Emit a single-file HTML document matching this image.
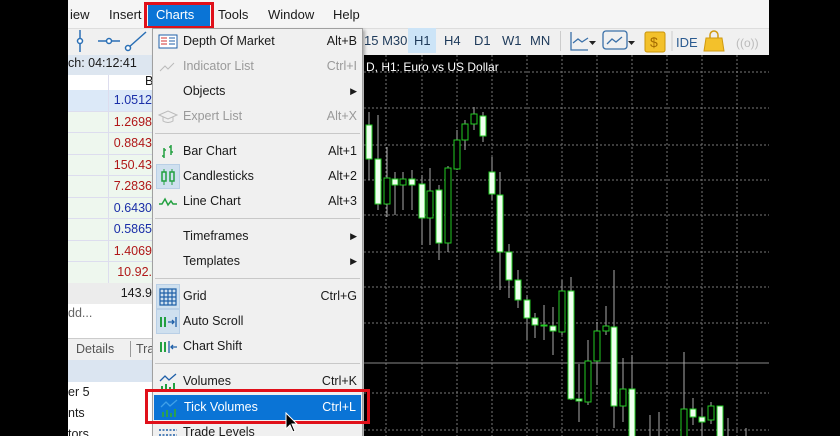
<!DOCTYPE html>
<html><head><meta charset="utf-8">
<style>
*{margin:0;padding:0;box-sizing:border-box}
body{width:840px;height:436px;background:#000;position:relative;overflow:hidden;font-family:"Liberation Sans",sans-serif;font-size:12.5px;color:#1a1a1a}
.abs{position:absolute}
#app{position:absolute;left:68px;top:0;width:701px;height:436px;background:#f0f0f0;overflow:hidden}
.mi{position:absolute;top:7px;font-size:13px}
.tf{position:absolute;top:33px;font-size:13px;color:#1e3a5a}
.row{position:absolute;left:0;width:84px;height:21.5px;border-bottom:1px solid #dde;background:#eef7ee}
.row span{position:absolute;right:0;top:3px;font-size:12.5px}
.menu{position:absolute;left:84px;top:28px;width:211px;height:420px;background:#f0f0f0;border:1px solid #a0a0a0;box-shadow:2px 2px 3px rgba(0,0,0,.3)}
.it{position:absolute;left:0;width:209px;height:25px;font-size:12.5px}
.it .t{position:absolute;left:30px;top:5px}
.it .k{position:absolute;right:5px;top:5px}
.dis{color:#9a9a9a}
.sep{position:absolute;left:2px;width:205px;height:1px;background:#c8c8c8}
.ic{position:absolute;left:4px;top:2px;width:22px;height:21px}
</style></head><body>
<div id="app">
 <div class="abs" style="left:0;top:0;width:701px;height:28px;background:#f5f5f5"></div>
 <div class="mi" style="left:2px">iew</div>
 <div class="mi" style="left:41px">Insert</div>
 <div class="abs" style="left:80px;top:5px;width:62px;height:21px;background:#0a74d6"></div>
 <div class="mi" style="left:88px;color:#fff">Charts</div>
 <div class="abs" style="left:76px;top:2px;width:70px;height:27px;border:3px solid #e0101a"></div>
 <div class="mi" style="left:150px">Tools</div>
 <div class="mi" style="left:200px">Window</div>
 <div class="mi" style="left:265px">Help</div>
 <div class="abs" style="left:0;top:28px;width:701px;height:26px;background:#f0f0f0;border-top:1px solid #ddd"></div>
 <svg class="abs" style="left:0;top:28px" width="90" height="26"><g stroke="#2a6fb5" stroke-width="1.5" fill="none"><line x1="12" y1="2" x2="12" y2="24"/><circle cx="12" cy="13" r="2.5" fill="#fff"/><line x1="30" y1="13" x2="52" y2="13"/><circle cx="41" cy="13" r="2.5" fill="#fff"/><line x1="60" y1="20" x2="78" y2="4"/><circle cx="60" cy="20" r="2.5" fill="#fff"/></g></svg>
 <div class="abs" style="left:340px;top:28px;width:28px;height:25px;background:#cce4f7"></div>
 <div class="tf" style="left:296px">15 M30</div>
 <div class="tf" style="left:346px">H1</div>
 <div class="tf" style="left:376px">H4</div>
 <div class="tf" style="left:406px">D1</div>
 <div class="tf" style="left:434px">W1</div>
 <div class="tf" style="left:462px">MN</div>
 <div class="abs" style="left:492px;top:31px;width:1px;height:20px;background:#ccc"></div>
 <svg class="abs" style="left:500px;top:28px" width="200" height="26"><g fill="none" stroke="#3a70a8" stroke-width="1.3"><path d="M3 4V22H20"/><path d="M5 15l5-4 4 3 6-4"/><path d="M21 13h7l-3.5 4z" fill="#222" stroke="none"/><rect x="35" y="3" width="24" height="18" rx="3"/><path d="M39 16l5-5 4 3 6-5"/><path d="M60 13h7l-3.5 4z" fill="#222" stroke="none"/></g>
 <rect x="77" y="4" width="20" height="20" rx="2" fill="#f3c12b" stroke="#c9950a"/><text x="82" y="19" font-size="14" fill="#a36a00" font-family="Liberation Sans">$</text>
 <line x1="104" y1="3" x2="104" y2="23" stroke="#ccc"/>
 <text x="108" y="19" font-size="13" fill="#2a5a90" font-family="Liberation Sans">IDE</text>
 <path d="M138 10h16l2 13h-20z" fill="#f3c12b" stroke="#d09a10"/><path d="M142 10v-3a4 4 0 0 1 8 0v3" fill="none" stroke="#d09a10" stroke-width="1.5"/>
 <text x="168" y="19" font-size="12" fill="#bbb" font-family="Liberation Sans">((o))</text></svg>
 <div class="abs" style="left:0;top:55px;width:84px;height:20px;background:#dde6f0"></div>
 <div class="abs" style="left:0;top:56px;font-size:12.5px">ch: 04:12:41</div>
 <div class="abs" style="left:0;top:75px;width:84px;height:15px;background:#fff"></div>
 <div class="abs" style="left:77px;top:74px">B</div>
 <div class="row" style="top:90px;background:#dce9f8"><span style="color:#1a2fa8">1.0512</span></div>
 <div class="row" style="top:111.5px"><span style="color:#b01818">1.2698</span></div>
 <div class="row" style="top:133px"><span style="color:#b01818">0.8843</span></div>
 <div class="row" style="top:154.5px"><span style="color:#b01818">150.43</span></div>
 <div class="row" style="top:176px"><span style="color:#b01818">7.2836</span></div>
 <div class="row" style="top:197.5px"><span style="color:#1a2fa8">0.6430</span></div>
 <div class="row" style="top:219px"><span style="color:#1a2fa8">0.5865</span></div>
 <div class="row" style="top:240.5px"><span style="color:#b01818">1.4069</span></div>
 <div class="row" style="top:262px"><span style="color:#b01818">10.92.</span></div>
 <div class="abs" style="left:40px;top:75px;width:1px;height:229px;background:#dde"></div>
 <div class="abs" style="left:0;top:283px;width:84px;height:21px;background:#ececec"></div>
 <div class="abs" style="right:617px;top:286px">143.9</div>
 <div class="abs" style="left:0;top:304px;width:84px;height:34px;background:#fff"></div>
 <div class="abs" style="left:0;top:306px;color:#666">dd...</div>
 <div class="abs" style="left:0;top:338px;width:84px;height:22px;background:#f0f0f0;border-top:1px solid #ccc"></div>
 <div class="abs" style="left:8px;top:342px;color:#555">Details</div>
 <div class="abs" style="left:62px;top:341px;width:1px;height:16px;background:#999"></div>
 <div class="abs" style="left:68px;top:342px;color:#555">Tra</div>
 <div class="abs" style="left:0;top:360px;width:84px;height:22px;background:#dbe5f1"></div>
 <div class="abs" style="left:0;top:382px;width:84px;height:54px;background:#fff"></div>
 <div class="abs" style="left:0;top:385px">er 5</div>
 <div class="abs" style="left:0;top:406px">nts</div>
 <div class="abs" style="left:0;top:427px">tors</div>
 <svg class="abs" style="left:296px;top:55px" width="405" height="381">
  <rect width="405" height="381" fill="#000"/>
  <g stroke="#777" stroke-width="1" stroke-dasharray="2,2">
   <line x1="22" y1="0" x2="22" y2="381"/><line x1="58" y1="0" x2="58" y2="381"/><line x1="93" y1="0" x2="93" y2="381"/><line x1="128" y1="0" x2="128" y2="381"/><line x1="163" y1="0" x2="163" y2="381"/><line x1="198" y1="0" x2="198" y2="381"/><line x1="233" y1="0" x2="233" y2="381"/><line x1="268" y1="0" x2="268" y2="381"/><line x1="303" y1="0" x2="303" y2="381"/><line x1="338" y1="0" x2="338" y2="381"/><line x1="373" y1="0" x2="373" y2="381"/>
   <line x1="0" y1="17" x2="405" y2="17"/><line x1="0" y1="53" x2="405" y2="53"/><line x1="0" y1="90" x2="405" y2="90"/><line x1="0" y1="125" x2="405" y2="125"/><line x1="0" y1="160" x2="405" y2="160"/><line x1="0" y1="197" x2="405" y2="197"/><line x1="0" y1="232" x2="405" y2="232"/><line x1="0" y1="268" x2="405" y2="268"/><line x1="0" y1="338" x2="405" y2="338"/><line x1="0" y1="375" x2="405" y2="375"/>
  </g>
  <line x1="0" y1="308" x2="405" y2="308" stroke="#888"/>
  <text x="2" y="16" fill="#fff" font-size="12" font-family="Liberation Sans">D, H1:  Euro vs US Dollar</text>
  <g transform="translate(-364,-55)" stroke="#aaa" stroke-width="1">
   <line x1="369" y1="112" x2="369" y2="180"/><line x1="378" y1="115" x2="378" y2="210"/><line x1="387" y1="147" x2="387" y2="217"/><line x1="395" y1="172" x2="395" y2="215"/><line x1="403" y1="172" x2="403" y2="210"/><line x1="412" y1="170" x2="412" y2="210"/><line x1="422" y1="175" x2="422" y2="245"/><line x1="430" y1="168" x2="430" y2="245"/><line x1="439" y1="185" x2="439" y2="260"/><line x1="448" y1="166" x2="448" y2="252"/><line x1="457" y1="130" x2="457" y2="170"/><line x1="465" y1="120" x2="465" y2="150"/><line x1="474" y1="107" x2="474" y2="130"/><line x1="483" y1="112" x2="483" y2="142"/><line x1="492" y1="157" x2="492" y2="200"/><line x1="500" y1="172" x2="500" y2="290"/><line x1="509" y1="244" x2="509" y2="298"/><line x1="518" y1="270" x2="518" y2="308"/><line x1="527" y1="295" x2="527" y2="340"/><line x1="535" y1="313" x2="535" y2="338"/><line x1="544" y1="305" x2="544" y2="340"/><line x1="553" y1="307" x2="553" y2="355"/><line x1="562" y1="280" x2="562" y2="335"/><line x1="571" y1="277" x2="571" y2="400"/><line x1="579" y1="364" x2="579" y2="422"/><line x1="588" y1="340" x2="588" y2="405"/><line x1="597" y1="322" x2="597" y2="385"/><line x1="606" y1="306" x2="606" y2="335"/><line x1="614" y1="270" x2="614" y2="428"/><line x1="623" y1="358" x2="623" y2="422"/><line x1="632" y1="355" x2="632" y2="436"/><line x1="650" y1="415" x2="650" y2="436"/><line x1="659" y1="412" x2="659" y2="436"/><line x1="684" y1="352" x2="684" y2="436"/><line x1="693" y1="398" x2="693" y2="425"/><line x1="702" y1="408" x2="702" y2="436"/><line x1="711" y1="402" x2="711" y2="424"/><line x1="728" y1="418" x2="728" y2="436"/><line x1="746" y1="428" x2="746" y2="436"/>
  </g>
  <g transform="translate(-364,-55)" stroke="#22cc22" stroke-width="1">
   <rect x="366" y="125" width="6" height="34" fill="#efffef"/><rect x="375" y="159" width="6" height="45" fill="#efffef"/><rect x="384" y="178" width="6" height="26" fill="#000"/><rect x="392" y="179" width="6" height="6" fill="#efffef"/><rect x="400" y="179" width="6" height="6" fill="#000"/><rect x="409" y="179" width="6" height="6" fill="#efffef"/><rect x="419" y="184" width="6" height="34" fill="#efffef"/><rect x="427" y="191" width="6" height="27" fill="#000"/><rect x="436" y="190" width="6" height="53" fill="#efffef"/><rect x="445" y="168" width="6" height="75" fill="#000"/><rect x="454" y="140" width="6" height="29" fill="#000"/><rect x="462" y="124" width="6" height="16" fill="#000"/><rect x="471" y="114" width="6" height="10" fill="#000"/><rect x="480" y="116" width="6" height="20" fill="#efffef"/><rect x="489" y="172" width="6" height="22" fill="#efffef"/><rect x="497" y="195" width="6" height="57" fill="#efffef"/><rect x="506" y="252" width="6" height="28" fill="#efffef"/><rect x="515" y="280" width="6" height="20" fill="#efffef"/><rect x="524" y="300" width="6" height="18" fill="#efffef"/><rect x="532" y="318" width="6" height="7" fill="#efffef"/><rect x="541" y="325" width="6" height="1" fill="#efffef"/><rect x="550" y="326" width="6" height="5" fill="#efffef"/><rect x="559" y="291" width="6" height="41" fill="#000"/><rect x="568" y="291" width="6" height="108" fill="#efffef"/><rect x="576" y="399" width="6" height="2" fill="#efffef"/><rect x="585" y="361" width="6" height="41" fill="#000"/><rect x="594" y="331" width="6" height="30" fill="#000"/><rect x="603" y="326" width="6" height="5" fill="#000"/><rect x="611" y="327" width="6" height="79" fill="#efffef"/><rect x="620" y="389" width="6" height="17" fill="#000"/><rect x="629" y="389" width="6" height="50" fill="#efffef"/><rect x="681" y="409" width="6" height="30" fill="#000"/><rect x="690" y="409" width="6" height="8" fill="#efffef"/><rect x="699" y="417" width="6" height="5" fill="#efffef"/><rect x="708" y="406" width="6" height="14" fill="#000"/><rect x="717" y="406" width="6" height="33" fill="#efffef"/>
  </g>
 </svg>
 <div class="menu">
  <div class="it" style="top:0"><svg class="ic" viewBox="0 0 22 21"><rect x="2" y="4" width="18" height="13" fill="#fff" stroke="#1f5fa8"/><path d="M4 7h6M4 10h6M4 13h6" stroke="#d03030"/><path d="M12 7h6M12 10h6M12 13h6" stroke="#1f5fa8"/></svg><span class="t">Depth Of Market</span><span class="k">Alt+B</span></div>
  <div class="it dis" style="top:25px"><svg class="ic" viewBox="0 0 22 21"><path d="M3 15l5-5 3 3 6-6" fill="none" stroke="#bbb"/></svg><span class="t">Indicator List</span><span class="k">Ctrl+I</span></div>
  <div class="it" style="top:50px"><span class="t">Objects</span><span class="k" style="font-size:9px;top:7px">▶</span></div>
  <div class="it dis" style="top:75px"><svg class="ic" viewBox="0 0 22 21"><path d="M2 9l9-4 9 4-9 4z M6 11v4c3 2 7 2 10 0v-4" fill="none" stroke="#bbb"/></svg><span class="t">Expert List</span><span class="k">Alt+X</span></div>
  <div class="sep" style="top:104px"></div>
  <div class="it" style="top:110px"><svg class="ic" viewBox="0 0 22 21"><path d="M7 7v10M5 15h2M7 9h2M14 4v10M12 6h2M14 11h2" stroke="#22a040" stroke-width="1.5" fill="none"/></svg><span class="t">Bar Chart</span><span class="k">Alt+1</span></div>
  <div class="it" style="top:135px"><div class="abs" style="left:3px;top:0;width:24px;height:25px;background:#cfe0ef;border:1px solid #b9cfe6"></div><svg class="ic" viewBox="0 0 22 21"><path d="M7 3v16M15 3v16" stroke="#22a040"/><rect x="5" y="6" width="4" height="9" fill="#cfe0ef" stroke="#22a040" stroke-width="1.5"/><rect x="13" y="6" width="4" height="9" fill="#cfe0ef" stroke="#22a040" stroke-width="1.5"/></svg><span class="t">Candlesticks</span><span class="k">Alt+2</span></div>
  <div class="it" style="top:160px"><svg class="ic" viewBox="0 0 22 21"><path d="M2 13h3l3-5 3 6 3-4 2 3h4" stroke="#22a040" stroke-width="1.5" fill="none"/></svg><span class="t">Line Chart</span><span class="k">Alt+3</span></div>
  <div class="sep" style="top:189px"></div>
  <div class="it" style="top:195px"><span class="t">Timeframes</span><span class="k" style="font-size:9px;top:7px">▶</span></div>
  <div class="it" style="top:220px"><span class="t">Templates</span><span class="k" style="font-size:9px;top:7px">▶</span></div>
  <div class="sep" style="top:249px"></div>
  <div class="it" style="top:255px"><div class="abs" style="left:3px;top:0;width:24px;height:25px;background:#cfe0ef;border:1px solid #b9cfe6"></div><svg class="ic" viewBox="0 0 22 21"><path d="M3 3h16v16H3zM3 7h16M3 11h16M3 15h16M7 3v16M11 3v16M15 3v16" stroke="#1f5fa8" fill="none" stroke-width="1.2"/></svg><span class="t">Grid</span><span class="k">Ctrl+G</span></div>
  <div class="it" style="top:280px"><div class="abs" style="left:3px;top:0;width:24px;height:25px;background:#cfe0ef;border:1px solid #b9cfe6"></div><svg class="ic" viewBox="0 0 22 21"><path d="M4 6v10M8 6v10" stroke="#22a040" stroke-width="2"/><path d="M11 11h6M15 9l2 2-2 2M19 6v10" stroke="#1f5fa8" fill="none" stroke-width="1.3"/></svg><span class="t">Auto Scroll</span></div>
  <div class="it" style="top:305px"><svg class="ic" viewBox="0 0 22 21"><path d="M4 6v10M8 6v10" stroke="#22a040" stroke-width="2"/><path d="M12 5v12M14 11h6M16 9l-2 2 2 2" stroke="#1f5fa8" fill="none" stroke-width="1.3"/></svg><span class="t">Chart Shift</span></div>
  <div class="sep" style="top:334px"></div>
  <div class="it" style="top:340px"><svg class="ic" viewBox="0 0 22 21"><path d="M3 10l5-5 4 4 7-6" stroke="#1f5fa8" fill="none" stroke-width="1.3"/><path d="M5 20v-5M9 20v-7M13 20v-4M17 20v-8" stroke="#22a040" stroke-width="2"/></svg><span class="t">Volumes</span><span class="k">Ctrl+K</span></div>
  <div class="it" style="top:366px;background:#0a74d6;color:#fff;left:1px;width:207px"><svg class="ic" viewBox="0 0 22 21"><path d="M3 10l5-5 4 4 7-6" stroke="#3fa0e8" fill="none" stroke-width="1.3"/><path d="M5 20v-5M9 20v-7M13 20v-4M17 20v-8" stroke="#2aa050" stroke-width="2"/></svg><span class="t">Tick Volumes</span><span class="k">Ctrl+L</span></div>
  <div class="it" style="top:391px"><svg class="ic" viewBox="0 0 22 21"><path d="M2 8h18M2 13h18" stroke="#1f5fa8" stroke-dasharray="2,1.5" stroke-width="1.5"/></svg><span class="t">Trade Levels</span></div>
 </div>
 <div class="abs" style="left:77px;top:389px;width:225px;height:35px;border:3px solid #e0101a"></div>
 <svg class="abs" style="left:217px;top:412px" width="14" height="22"><path d="M1 1v16l4-4 3 7 2-1-3-7h5z" fill="#000" stroke="#fff"/></svg>
</div>
</body></html>
